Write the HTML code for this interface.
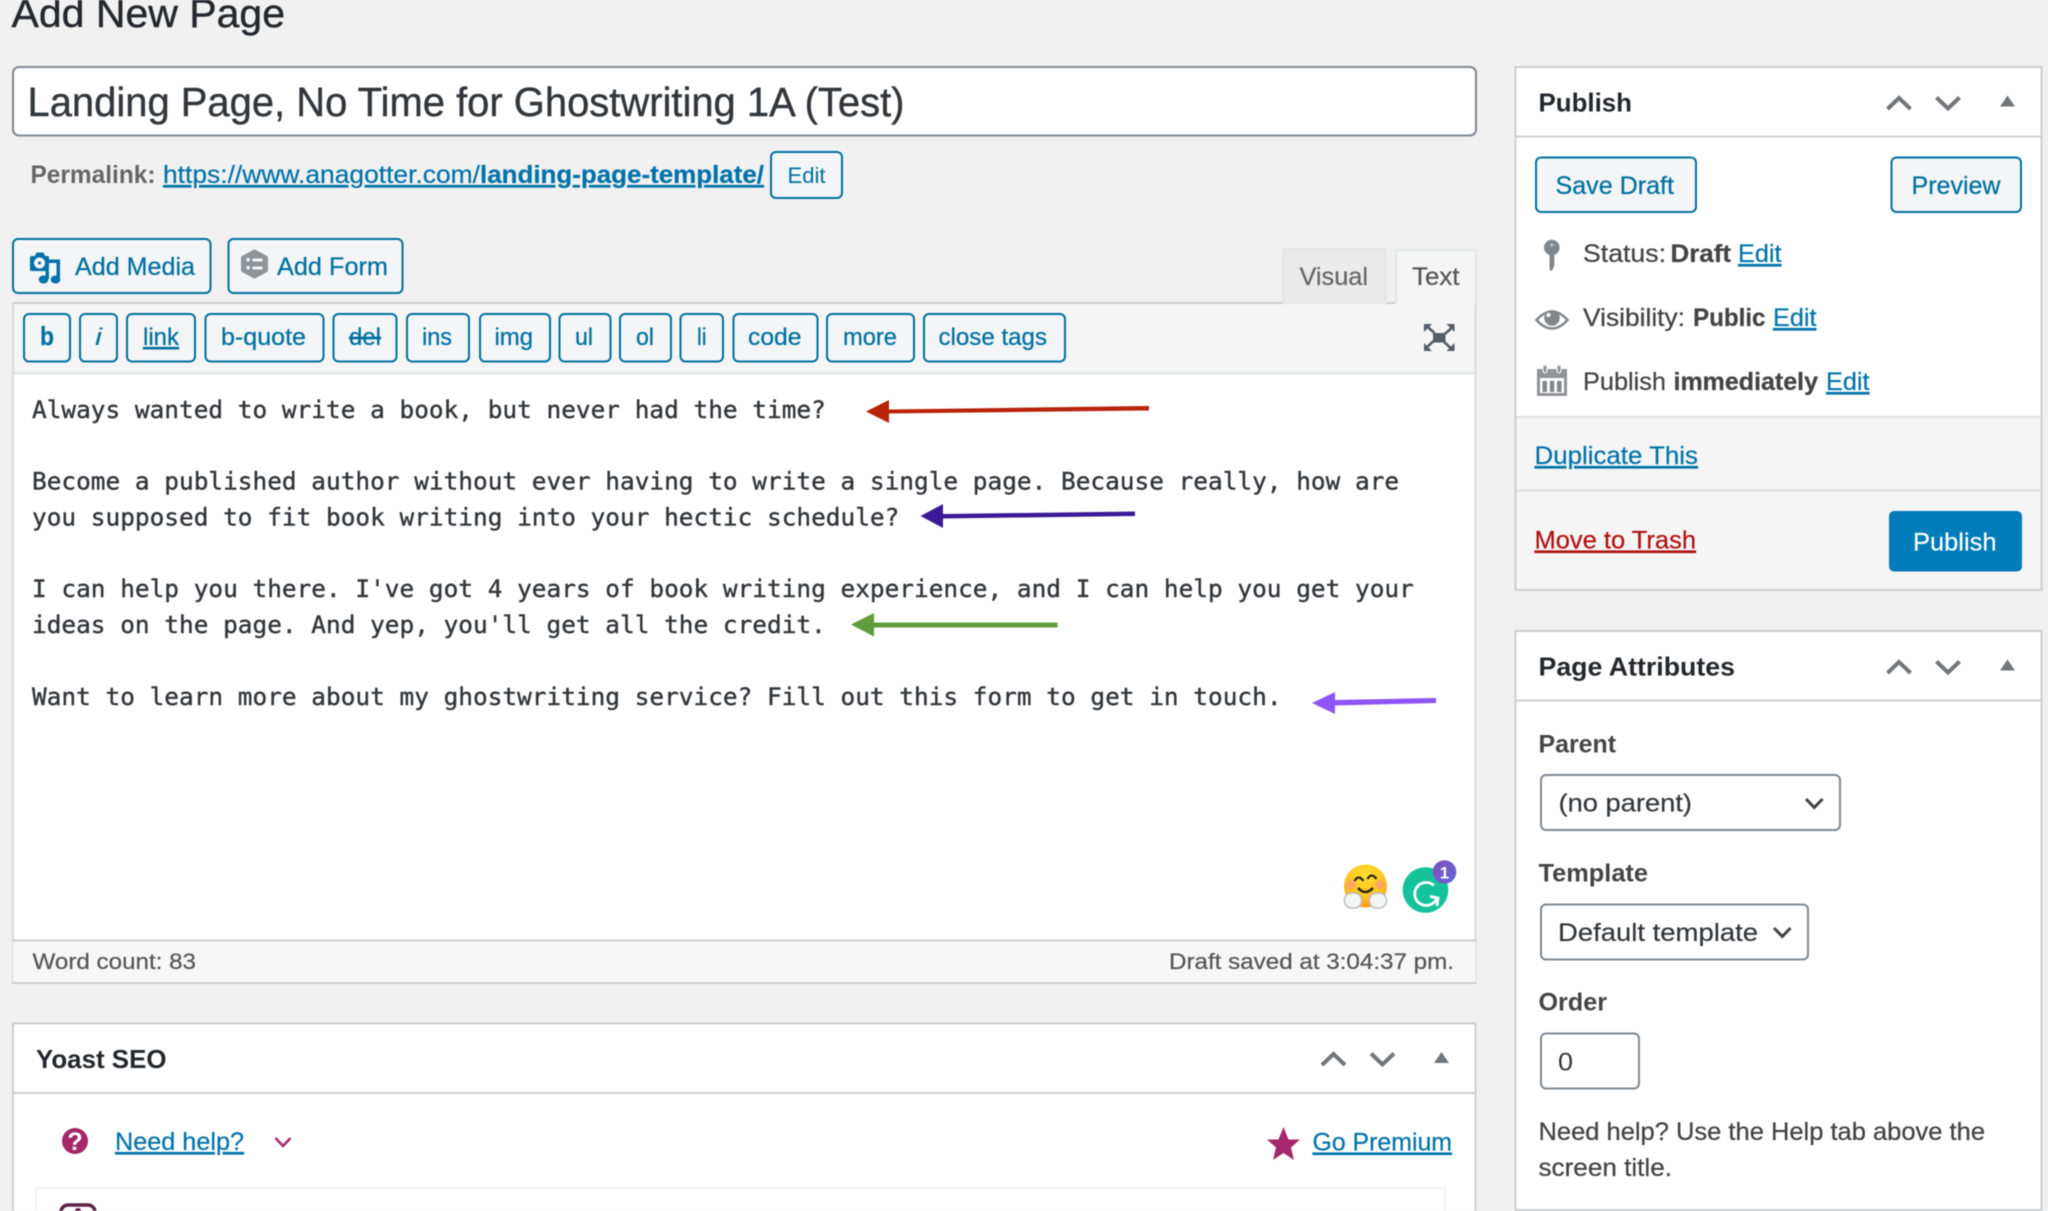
<!DOCTYPE html>
<html lang="en"><head><meta charset="utf-8"><title>Add New Page</title>
<style>
html,body{margin:0;padding:0;background:#f1f1f1;width:2048px;height:1211px;overflow:hidden}
svg{display:block;font-family:"Liberation Sans",sans-serif;filter:blur(.4px)}
.btn{fill:#f3f5f6;stroke:#0071a1;stroke-width:2}
.bt{fill:#0071a1;stroke:#0071a1;stroke-width:.25;font-size:25px}
.tb{fill:#0071a1;stroke:#0071a1;stroke-width:.25;font-size:24px}
.a{fill:#0073aa;stroke:#0073aa;stroke-width:.2;font-size:25px;text-decoration:underline}
.t{fill:#444;stroke:#444;stroke-width:.25;font-size:25px}
.bd{font-weight:700}
.h{fill:#23282d;font-size:26px;font-weight:700}
.lab{fill:#444;font-size:25px;font-weight:700}
.m{font-family:"DejaVu Sans Mono","Liberation Mono",monospace;font-size:24.4px;fill:#32373c;stroke:#32373c;stroke-width:.4}
.box{fill:#fff;stroke:#ccd0d4;stroke-width:2}
.ln{stroke:#ccd0d4;stroke-width:2}
.ch{fill:none;stroke:#72777c;stroke-width:4}
.inp{fill:#fff;stroke:#7e8993;stroke-width:2}
.sel{fill:none;stroke:#444;stroke-width:3}
</style></head><body>
<svg width="2048" height="1211" viewBox="0 0 2048 1211" xmlns="http://www.w3.org/2000/svg">
<defs>
<radialGradient id="em" cx="50%" cy="25%" r="80%"><stop offset="0" stop-color="#ffe033"/><stop offset=".6" stop-color="#ffc21f"/><stop offset="1" stop-color="#ff8f1a"/></radialGradient>
<linearGradient id="bg" x1="0" y1="0" x2="1" y2="1"><stop offset="0" stop-color="#8a4cc0"/><stop offset="1" stop-color="#5b68d8"/></linearGradient>
</defs>
<rect width="2048" height="1211" fill="#f1f1f1"/>

<!-- heading -->
<text x="11.500" y="27" fill="#23282d" stroke="#23282d" stroke-width=".4" font-size="40" textLength="273.500" lengthAdjust="spacingAndGlyphs">Add New Page</text>

<!-- title -->
<rect x="13" y="67" width="1463" height="68.500" rx="6" class="inp"/>
<text x="27.500" y="116" fill="#32373c" stroke="#32373c" stroke-width=".4" font-size="41" textLength="877" lengthAdjust="spacingAndGlyphs">Landing Page, No Time for Ghostwriting 1A (Test)</text>

<!-- permalink -->
<text x="30.500" y="183" fill="#666" font-size="25" font-weight="700" textLength="125" lengthAdjust="spacingAndGlyphs">Permalink:</text>
<text x="163" y="183" class="a" textLength="317" lengthAdjust="spacingAndGlyphs">https://www.anagotter.com/</text>
<text x="480" y="183" class="a bd" textLength="284" lengthAdjust="spacingAndGlyphs">landing-page-template/</text>
<rect x="771" y="152" width="71" height="46" rx="5" class="btn"/>
<text x="787.500" y="183" fill="#0071a1" font-size="22" textLength="38" lengthAdjust="spacingAndGlyphs">Edit</text>

<!-- media buttons -->
<rect x="13" y="239" width="197.500" height="54" rx="5" class="btn"/>
<g fill="#0073aa">
<path d="M31 256h4l1.500-3.500h7l1.500 3.500h2.500a1.500 1.500 0 0 1 1.500 1.500v12a1.500 1.500 0 0 1-1.500 1.500h-16a1.500 1.500 0 0 1-1.500-1.500v-12a1.500 1.500 0 0 1 1.500-1.500z"/>
<circle cx="39.500" cy="263" r="5.500" fill="#f3f5f6"/><circle cx="39.500" cy="263" r="1.500"/>
<path d="M49 259.500h11v20h-3.500v-16.500h-7.500z"/><rect x="45.500" y="271" width="3.500" height="8"/>
<ellipse cx="43.500" cy="279.500" rx="4.800" ry="4"/><ellipse cx="55.500" cy="279.500" rx="4.800" ry="4"/>
</g>
<text x="75" y="275" class="bt" textLength="120" lengthAdjust="spacingAndGlyphs">Add Media</text>
<rect x="228.500" y="239" width="174" height="54" rx="5" class="btn"/>
<path d="M254.500 251 L266.500 257.500 V270.500 L254.500 277 L242.500 270.500 V257.500Z" fill="#8d9399" stroke="#8d9399" stroke-width="3" stroke-linejoin="round"/>
<g fill="#f3f5f6"><rect x="246.500" y="258" width="3.500" height="3.500" rx="1"/><rect x="246.500" y="266" width="3.500" height="3.500" rx="1"/><rect x="252.500" y="258.500" width="10" height="3"/><rect x="252.500" y="266.500" width="10" height="3"/></g>
<text x="277" y="275" class="bt" textLength="111" lengthAdjust="spacingAndGlyphs">Add Form</text>

<!-- tabs -->
<rect x="13" y="302" width="1462" height="2" fill="#ccd0d4"/>
<rect x="1283.500" y="249.500" width="102" height="55" fill="#ebebeb" stroke="#e3e4e5" stroke-width="2"/>
<rect x="1396" y="250" width="80" height="56" fill="#f5f5f5" stroke="#e3e5e7" stroke-width="2"/>
<text x="1299.500" y="285" fill="#666" stroke="#666" stroke-width=".2" font-size="25" textLength="68.500" lengthAdjust="spacingAndGlyphs">Visual</text>
<text x="1412" y="285" fill="#555" stroke="#555" stroke-width=".2" font-size="25" textLength="47.500" lengthAdjust="spacingAndGlyphs">Text</text>

<!-- editor -->
<rect x="13" y="304" width="1462" height="70" fill="#f5f5f5"/>
<rect x="1396" y="302" width="79" height="4" fill="#f5f5f5"/>
<rect x="13" y="374" width="1462" height="566" fill="#fff"/>
<path d="M13 303V982M1475.500 304V982" stroke="#d8dbde" stroke-width="2"/>
<path d="M13 373.500H1476" stroke="#dfe1e3" stroke-width="2"/>

<!-- quicktags -->
<g>
<rect x="24" y="314" width="46" height="47.500" rx="5" class="btn"/>
<rect x="80" y="314" width="37" height="47.500" rx="5" class="btn"/>
<rect x="127" y="314" width="68" height="47.500" rx="5" class="btn"/>
<rect x="205.500" y="314" width="118" height="47.500" rx="5" class="btn"/>
<rect x="333.500" y="314" width="63" height="47.500" rx="5" class="btn"/>
<rect x="407" y="314" width="62" height="47.500" rx="5" class="btn"/>
<rect x="480" y="314" width="70" height="47.500" rx="5" class="btn"/>
<rect x="559.500" y="314" width="51" height="47.500" rx="5" class="btn"/>
<rect x="620" y="314" width="51" height="47.500" rx="5" class="btn"/>
<rect x="680.500" y="314" width="42.500" height="47.500" rx="5" class="btn"/>
<rect x="733.500" y="314" width="84" height="47.500" rx="5" class="btn"/>
<rect x="827" y="314" width="87" height="47.500" rx="5" class="btn"/>
<rect x="924" y="314" width="141" height="47.500" rx="5" class="btn"/>
</g>
<g class="tb">
<text x="40" y="345" class="tb bd" font-size="26" style="font-size:26px" textLength="14" lengthAdjust="spacingAndGlyphs">b</text>
<text x="95" y="345" font-style="italic" style="font-size:24px;stroke-width:0" textLength="7" lengthAdjust="spacingAndGlyphs">i</text>
<text x="143" y="345" class="tb" style="text-decoration:underline" textLength="36" lengthAdjust="spacingAndGlyphs">link</text>
<text x="221" y="345" class="tb" textLength="85" lengthAdjust="spacingAndGlyphs">b-quote</text>
<text x="349" y="345" class="tb" style="text-decoration:line-through" textLength="32" lengthAdjust="spacingAndGlyphs">del</text>
<text x="422" y="345" class="tb" textLength="30" lengthAdjust="spacingAndGlyphs">ins</text>
<text x="494.500" y="345" class="tb" textLength="38.500" lengthAdjust="spacingAndGlyphs">img</text>
<text x="575" y="345" class="tb" textLength="18" lengthAdjust="spacingAndGlyphs">ul</text>
<text x="636" y="345" class="tb" textLength="18" lengthAdjust="spacingAndGlyphs">ol</text>
<text x="697" y="345" class="tb" textLength="9.500" lengthAdjust="spacingAndGlyphs">li</text>
<text x="748" y="345" class="tb" textLength="53.500" lengthAdjust="spacingAndGlyphs">code</text>
<text x="843" y="345" class="tb" textLength="54" lengthAdjust="spacingAndGlyphs">more</text>
<text x="938.500" y="345" class="tb" textLength="108.500" lengthAdjust="spacingAndGlyphs">close tags</text>
</g>

<!-- fullscreen icon -->
<g fill="#555d66">
<rect x="1433" y="333" width="12.500" height="9.500"/>
<path d="M1424 324h8l-2.600 2.600 6 5.500-1.900 1.900-6-5.500-3.500 3.500zM1454.500 324v8l-2.600-2.600-6 5.500-1.900-1.900 6-5.500-3.500-3.500zM1424 351v-8l2.600 2.600 6-5.500 1.900 1.900-6 5.500 3.500 3.500zM1454.500 351h-8l2.600-2.600-6-5.500 1.900-1.900 6 5.500 3.500-3.500z"/>
</g>

<!-- text area -->
<text x="32" y="418" class="m" textLength="793.800">Always wanted to write a book, but never had the time?</text>
<text x="32" y="489.500" class="m" textLength="1367.100">Become a published author without ever having to write a single page. Because really, how are</text>
<text x="32" y="525.500" class="m" textLength="867.300">you supposed to fit book writing into your hectic schedule?</text>
<text x="32" y="597" class="m" textLength="1381.800">I can help you there. I've got 4 years of book writing experience, and I can help you get your</text>
<text x="32" y="633" class="m" textLength="793.800">ideas on the page. And yep, you'll get all the credit.</text>
<text x="32" y="705" class="m" textLength="1249.500">Want to learn more about my ghostwriting service? Fill out this form to get in touch.</text>

<!-- arrows -->
<path d="M866 411.500L889 400V409.500L1149 406V410.500L889 413.500V423Z" fill="#b8230a"/>
<path d="M920.500 516L943 504V514L1135 511.500V516L943 518.500V528Z" fill="#3a1a96"/>
<path d="M851 624.500L874 613V622.500H1057.500V627.500H874V636.500Z" fill="#5f9c3c"/>
<path d="M1312 703L1335 692V700L1436 698V703L1335 705.500V714Z" fill="#8b55f7"/>

<!-- emoji -->
<circle cx="1365.500" cy="886" r="21.500" fill="url(#em)"/>
<circle cx="1351" cy="884.500" r="4.500" fill="#ff9a7a" opacity=".8"/><circle cx="1380" cy="884.500" r="4.500" fill="#ff9a7a" opacity=".8"/>
<path d="M1354.500 881q4-7 9 0M1367.500 879q4-7 9 0" fill="none" stroke="#2a2320" stroke-width="2.200"/>
<path d="M1358 888q7.500 8 15 0" fill="none" stroke="#2a2320" stroke-width="2.500"/>
<g fill="#f4f6f6" stroke="#b9c0c0" stroke-width="1.500"><rect x="1344.500" y="893" width="17" height="15" rx="7"/><rect x="1369.500" y="893" width="17" height="15" rx="7"/></g>

<!-- grammarly -->
<circle cx="1425.500" cy="890" r="22.800" fill="#15c39a"/>
<path d="M1434 885.500A11.500 11.500 0 1 0 1437 898" fill="none" stroke="#fff" stroke-width="2.800"/>
<path d="M1430 896.500L1438 898L1437 906" fill="none" stroke="#fff" stroke-width="2.800"/>
<circle cx="1444.500" cy="872" r="11.800" fill="url(#bg)"/>
<text x="1444.500" y="878.500" fill="#fff" font-size="17" font-weight="700" text-anchor="middle">1</text>

<!-- status bar -->
<rect x="13" y="940" width="1462.500" height="42" fill="#f7f7f7"/>
<path d="M12 940.500H1476.500M12 983H1476.500" class="ln"/>
<text x="32.500" y="969" fill="#555" stroke="#555" stroke-width=".2" font-size="22" textLength="163.500" lengthAdjust="spacingAndGlyphs">Word count: 83</text>
<text x="1169" y="969" fill="#555" stroke="#555" stroke-width=".2" font-size="22" textLength="285" lengthAdjust="spacingAndGlyphs">Draft saved at 3:04:37 pm.</text>

<!-- Yoast -->
<rect x="13" y="1023.500" width="1462.500" height="200" class="box"/>
<path d="M13 1093H1476" class="ln"/>
<text x="36" y="1068" class="h" textLength="130.500" lengthAdjust="spacingAndGlyphs">Yoast SEO</text>
<path d="M1322 1065L1333.500 1054L1345 1065M1371 1053.500L1382.500 1064.500L1394 1053.500" class="ch"/>
<path d="M1441.500 1052L1449 1063H1434Z" fill="#72777c"/>
<ellipse cx="75" cy="1141" rx="13" ry="13" fill="#a4286a"/>
<text x="75" y="1150" fill="#fff" font-size="25" font-weight="700" text-anchor="middle">?</text>
<text x="115" y="1150" class="a" textLength="129" lengthAdjust="spacingAndGlyphs">Need help?</text>
<path d="M275.500 1138L283 1146L290.500 1138" fill="none" stroke="#a4286a" stroke-width="2.500"/>
<path d="M1283.500 1127L1288.500 1139.500L1300 1139.500L1291 1147.500L1294 1160L1283.500 1153L1273 1160L1276 1147.500L1267 1139.500L1278.500 1139.500Z" fill="#a4286a"/>
<text x="1312.500" y="1150.500" class="a" textLength="139.500" lengthAdjust="spacingAndGlyphs">Go Premium</text>
<rect x="36" y="1188" width="1409" height="30" fill="#fff" stroke="#f5f5f5" stroke-width="2"/>
<rect x="61" y="1205" width="34" height="20" rx="7" fill="#fff" stroke="#5d2345" stroke-width="3.500"/>
<circle cx="78" cy="1211" r="3" fill="#5d2345"/>

<!-- Publish box -->
<rect x="1515.500" y="67" width="526" height="523" class="box"/>
<rect x="1516.500" y="417" width="524" height="172" fill="#f5f5f5"/>
<path d="M1516 136.500H2041" class="ln"/>
<path d="M1516 417H2041M1516 490.500H2041" stroke="#dcdfe2" stroke-width="2"/>
<text x="1538.500" y="111.500" class="h" textLength="93.500" lengthAdjust="spacingAndGlyphs">Publish</text>
<path d="M1887.500 109L1899 98L1910.500 109M1936.500 97.500L1948 108.500L1959.500 97.500" class="ch"/>
<path d="M2007.500 95.500L2015 106.500H2000Z" fill="#72777c"/>
<rect x="1536" y="157.500" width="160" height="54.500" rx="5" class="btn"/>
<text x="1555.500" y="194" class="bt" textLength="118.500" lengthAdjust="spacingAndGlyphs">Save Draft</text>
<rect x="1891.500" y="157.500" width="129.500" height="54.500" rx="5" class="btn"/>
<text x="1911.500" y="194" class="bt" textLength="89" lengthAdjust="spacingAndGlyphs">Preview</text>

<!-- pin -->
<circle cx="1551.800" cy="247.500" r="7.800" fill="#82878c"/><circle cx="1551.800" cy="245" r="1.500" fill="#c9cccf"/>
<path d="M1549.500 253h4.800v13l-2.500 5l-2.300-1z" fill="#82878c"/>
<text x="1583" y="262" class="t" textLength="83" lengthAdjust="spacingAndGlyphs">Status:</text>
<text x="1670.500" y="262" class="t bd" textLength="60.500" lengthAdjust="spacingAndGlyphs">Draft</text>
<text x="1738" y="262" class="a" textLength="43.500" lengthAdjust="spacingAndGlyphs">Edit</text>

<!-- eye -->
<path d="M1536.500 320Q1552 303 1567.500 320Q1552 337 1536.500 320Z" fill="#fff" stroke="#82878c" stroke-width="2.500"/>
<circle cx="1552" cy="318" r="7.800" fill="#82878c"/><circle cx="1548.500" cy="315" r="2" fill="#fff"/>
<text x="1583" y="326" class="t" textLength="102" lengthAdjust="spacingAndGlyphs">Visibility:</text>
<text x="1693" y="326" class="t bd" textLength="72.500" lengthAdjust="spacingAndGlyphs">Public</text>
<text x="1773" y="326" class="a" textLength="43.500" lengthAdjust="spacingAndGlyphs">Edit</text>

<!-- calendar -->
<rect x="1537" y="369" width="30" height="27" fill="#8f9499"/>
<rect x="1540" y="378" width="24" height="15" fill="#fff"/>
<g fill="#82878c"><rect x="1542.500" y="381" width="4.500" height="11"/><rect x="1549.800" y="381" width="4.500" height="11"/><rect x="1557" y="381" width="4.500" height="11"/></g>
<rect x="1543" y="365" width="4" height="8" rx="2" fill="#8f9499" stroke="#fff"/><rect x="1557" y="365" width="4" height="8" rx="2" fill="#8f9499" stroke="#fff"/>
<text x="1583" y="390" class="t" textLength="83" lengthAdjust="spacingAndGlyphs">Publish</text>
<text x="1673.500" y="390" class="t bd" textLength="144.500" lengthAdjust="spacingAndGlyphs">immediately</text>
<text x="1826" y="390" class="a" textLength="43.500" lengthAdjust="spacingAndGlyphs">Edit</text>

<text x="1534.500" y="464" class="a" textLength="163.500" lengthAdjust="spacingAndGlyphs">Duplicate This</text>
<text x="1534.500" y="548.500" class="a" style="fill:#b30f0f;stroke:#b30f0f" textLength="161.500" lengthAdjust="spacingAndGlyphs">Move to Trash</text>
<rect x="1889" y="511" width="133" height="60.500" rx="5" fill="#007cba"/>
<text x="1913" y="550.500" fill="#fff" stroke="#fff" stroke-width=".2" font-size="25" textLength="83.500" lengthAdjust="spacingAndGlyphs">Publish</text>

<!-- Page Attributes -->
<rect x="1515.500" y="631" width="526" height="579" class="box"/>
<path d="M1516 700.500H2041" class="ln"/>
<text x="1538.500" y="675.500" class="h" textLength="196.500" lengthAdjust="spacingAndGlyphs">Page Attributes</text>
<path d="M1887.500 673L1899 662L1910.500 673M1936.500 661.500L1948 672.500L1959.500 661.500" class="ch"/>
<path d="M2007.500 659.500L2015 670.500H2000Z" fill="#72777c"/>
<text x="1538.500" y="752.500" class="lab" textLength="77.500" lengthAdjust="spacingAndGlyphs">Parent</text>
<rect x="1541" y="775" width="299" height="55" rx="5" class="inp"/>
<text x="1558.500" y="811.500" fill="#32373c" stroke="#32373c" stroke-width=".2" font-size="25" textLength="133.500" lengthAdjust="spacingAndGlyphs">(no parent)</text>
<path d="M1806 799L1814.300 807.500L1822.500 799" class="sel"/>
<text x="1538.500" y="881.500" class="lab" textLength="109.500" lengthAdjust="spacingAndGlyphs">Template</text>
<rect x="1541" y="904.500" width="267" height="55" rx="5" class="inp"/>
<text x="1558" y="941" fill="#32373c" stroke="#32373c" stroke-width=".2" font-size="25" textLength="200" lengthAdjust="spacingAndGlyphs">Default template</text>
<path d="M1774 928L1782.300 936.500L1790.500 928" class="sel"/>
<text x="1538.500" y="1010.500" class="lab" textLength="68.500" lengthAdjust="spacingAndGlyphs">Order</text>
<rect x="1541" y="1033.500" width="98" height="55" rx="5" class="inp"/>
<text x="1558" y="1070.500" fill="#32373c" font-size="25" textLength="15" lengthAdjust="spacingAndGlyphs">0</text>
<text x="1538.500" y="1140" class="t" textLength="446.500" lengthAdjust="spacingAndGlyphs">Need help? Use the Help tab above the</text>
<text x="1538.500" y="1176" class="t" textLength="133.500" lengthAdjust="spacingAndGlyphs">screen title.</text>
</svg>
</body></html>
